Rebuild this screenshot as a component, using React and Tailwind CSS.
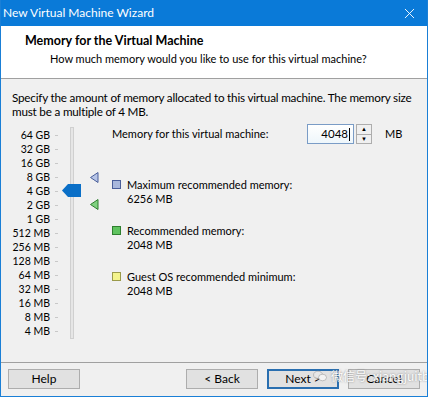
import { X } from 'lucide-react';

const SCALE = ['64 GB', '32 GB', '16 GB', '8 GB', '4 GB', '2 GB', '1 GB', '512 MB', '256 MB', '128 MB', '64 MB', '32 MB', '16 MB', '8 MB', '4 MB'];

const LEGEND = [
  { label: 'Maximum recommended memory:', value: '6256 MB', color: 'bg-[#a9b8dc]', border: 'border-[#4a5f9a]' },
  { label: 'Recommended memory:', value: '2048 MB', color: 'bg-[#5fc35f]', border: 'border-[#2f7f2f]' },
  { label: 'Guest OS recommended minimum:', value: '2048 MB', color: 'bg-[#f4f48c]', border: 'border-[#9a9a4a]' },
];

function Marker({ fill, stroke }) {
  return (
    <svg width="9" height="11" viewBox="0 0 9 11">
      <polygon points="8,0.5 8,10.5 0.5,5.5" fill={fill} stroke={stroke} strokeWidth="1" />
    </svg>
  );
}

function Btn({ children, primary }) {
  return (
    <button
      className={
        'w-[72px] h-[20px] bg-[#e1e1e1] text-[12px] text-black flex items-center justify-center ' +
        (primary ? 'border-2 border-[#2a6fb0]' : 'border border-[#adadad]')
      }
    >
      {children}
    </button>
  );
}

export default function App() {
  return (
    <div className="w-[428px] h-[397px] flex flex-col bg-[#f0f0f0] border-x border-b border-[#1a7fd6] font-['Lato','Noto_Sans',sans-serif] text-black relative overflow-hidden">
      {/* Title bar */}
      <div className="h-[26px] bg-[#0a7ad8] flex items-center justify-between pl-[3px] pr-[10px] text-white shrink-0 -mx-px">
        <span className="text-[12px] leading-none">New Virtual Machine Wizard</span>
        <X size={17} strokeWidth={1.3} />
      </div>

      {/* Header */}
      <div className="h-[53px] bg-white border-b border-[#a0a0a0] pl-[24px] pt-[7px] shrink-0">
        <div className="text-[12.5px] font-bold leading-[16px]">Memory for the Virtual Machine</div>
        <div className="text-[11px] leading-[16px] pl-[25px] mt-[2px]">How much memory would you like to use for this virtual machine?</div>
      </div>

      {/* Body */}
      <div className="flex-1 flex flex-col pl-[11px] pr-[4px] pt-[11px]">
        <p className="text-[11.7px] leading-[14px] tracking-[-0.2px]">
          Specify the amount of memory allocated to this virtual machine. The memory size must be a multiple of 4 MB.
        </p>

        <div className="flex mt-[10px]">
          {/* Scale */}
          <div className="flex flex-col w-[38px] items-end">
            {SCALE.map((s) => (
              <div key={s} className="h-[14px] text-[10.5px] leading-[14px] whitespace-nowrap">{s}</div>
            ))}
          </div>
          <div className="flex flex-col w-[12px] items-center">
            {SCALE.map((s) => (
              <div key={s} className="h-[14px] flex items-center"><div className="w-[3px] h-px bg-[#c8c8c8]" /></div>
            ))}
          </div>
          {/* Track + thumb */}
          <div className="relative w-[22px] h-[210px]">
            <div className="absolute left-[8px] -top-[1px] -bottom-[1px] w-[4px] bg-[#e6e6e6] border border-[#d0d0d0]" />
            <svg className="absolute left-0 top-[56px]" width="19" height="13" viewBox="0 0 19 13">
              <polygon points="6,0 19,0 19,13 6,13 0,6.5" fill="#0a6fc7" />
            </svg>
          </div>
          {/* Markers */}
          <div className="relative w-[14px]">
            <div className="absolute left-[6px] top-[44px]"><Marker fill="#b6c4e6" stroke="#4a5f9a" /></div>
            <div className="absolute left-[6px] top-[71px]"><Marker fill="#7fd17f" stroke="#2f7f2f" /></div>
          </div>

          {/* Right column */}
          <div className="flex-1 flex flex-col pl-[14px]">
            <div className="flex items-center h-[20px] -mt-[4px]">
              <span className="text-[11px] w-[195px]">Memory for this virtual machine:</span>
              <div className="w-[47px] h-[20px] border border-[#7a9cc6] bg-gradient-to-b from-white to-[#eef6fb] flex items-center justify-end pr-[3px] text-[11.5px]">
                4048<span className="inline-block w-px h-[13px] bg-black ml-px" />
              </div>
              <div className="ml-[2px] w-[16px] h-[20px] flex flex-col border border-[#adadad] bg-[#f0f0f0]">
                <div className="flex-1 flex items-center justify-center border-b border-[#adadad] text-[6px] leading-none">▲</div>
                <div className="flex-1 flex items-center justify-center text-[6px] leading-none">▼</div>
              </div>
              <span className="text-[11px] ml-[13px]">MB</span>
            </div>

            <div className="flex flex-col gap-[18px] mt-[34px]">
              {LEGEND.map((l) => (
                <div key={l.label} className="flex">
                  <div className={'w-[9px] h-[9px] mt-[2px] border ' + l.color + ' ' + l.border} />
                  <div className="pl-[6px] text-[11px] leading-[14px]">
                    <div>{l.label}</div>
                    <div>{l.value}</div>
                  </div>
                </div>
              ))}
            </div>
          </div>
        </div>
      </div>

      {/* Footer */}
      <div className="h-[34px] border-t border-[#a0a0a0] flex items-center px-[7px] pb-[1px] shrink-0">
        <Btn>Help</Btn>
        <div className="flex-1" />
        <div className="flex gap-[9px]">
          <Btn>&lt; Back</Btn>
          <Btn primary>Next &gt;</Btn>
          <Btn>Cancel</Btn>
        </div>
      </div>

      {/* Watermark */}
      <div className="absolute left-[312px] top-[367px] flex items-center gap-[4px] text-[12px] text-white [text-shadow:0_0_2px_#777] font-['Noto_Sans_CJK_SC',sans-serif] whitespace-nowrap opacity-90 pointer-events-none">
        <svg width="14" height="12" viewBox="0 0 14 12">
          <ellipse cx="5" cy="5" rx="4.5" ry="3.8" fill="#e8e8e8" stroke="#999" strokeWidth="0.6" />
          <ellipse cx="9.5" cy="7.5" rx="4" ry="3.3" fill="#f4f4f4" stroke="#999" strokeWidth="0.6" />
        </svg>
        <span>微信号: xiangjuitb</span>
      </div>
    </div>
  );
}
